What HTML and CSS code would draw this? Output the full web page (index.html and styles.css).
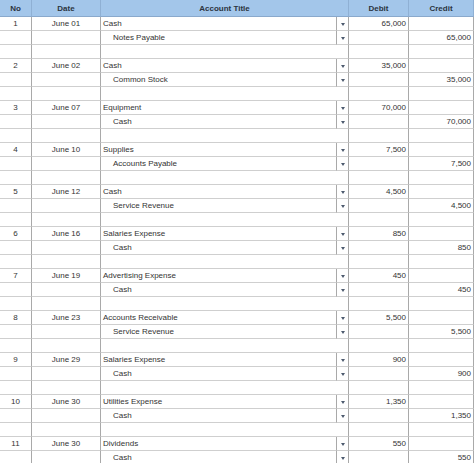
FILE: index.html
```html
<!DOCTYPE html>
<html>
<head>
<meta charset="utf-8">
<link rel="stylesheet" href="styles.css">
</head>
<body>
<div class="sheet" id="sheet">
  <div class="hd">No</div>
  <div class="hd">Date</div>
  <div class="hd span2">Account Title</div>
  <div class="hd">Debit</div>
  <div class="hd last">Credit</div>
</div>
<script src="app.js"></script>
</body>
</html>
```
FILE: styles.css
```css
html, body {
  margin: 0;
  padding: 0;
  background: #ffffff;
  overflow: hidden;
}
.sheet {
  display: grid;
  grid-template-columns: 32px 69px 236px 12px 60px 65px;
  grid-template-rows: 17px;
  grid-auto-rows: 14px;
  font-family: "Liberation Sans", Arial, sans-serif;
  font-size: 8px;
  color: #333333;
}
.sheet > div {
  box-sizing: border-box;
  border-right: 1px solid #a9a9a9;
  border-bottom: 1px solid #cfcfcf;
  display: flex;
  align-items: center;
  white-space: nowrap;
  overflow: hidden;
}
.sheet > .hd {
  background: #a3c6ea;
  font-weight: bold;
  color: #2b3440;
  justify-content: center;
  border-right: 1px solid #8fb0d4;
  border-bottom: 1px solid #8aa9cc;
}
.span2 { grid-column: span 2; }
.c { justify-content: center; }
.acct { padding-left: 2px; }
.acct.ind { padding-left: 12px; }
.num { justify-content: flex-end; padding-right: 2px; }
.sheet > .arr {
  justify-content: center;
  padding-top: 1px;
}
.arr::before {
  content: "";
  width: 0;
  height: 0;
  border-left: 2.5px solid transparent;
  border-right: 2.5px solid transparent;
  border-top: 3px solid #4d5a6e;
}
```
FILE: app.js
```js
var data = [
  ["1","June 01","Cash","Notes Payable","65,000"],
  ["2","June 02","Cash","Common Stock","35,000"],
  ["3","June 07","Equipment","Cash","70,000"],
  ["4","June 10","Supplies","Accounts Payable","7,500"],
  ["5","June 12","Cash","Service Revenue","4,500"],
  ["6","June 16","Salaries Expense","Cash","850"],
  ["7","June 19","Advertising Expense","Cash","450"],
  ["8","June 23","Accounts Receivable","Service Revenue","5,500"],
  ["9","June 29","Salaries Expense","Cash","900"],
  ["10","June 30","Utilities Expense","Cash","1,350"],
  ["11","June 30","Dividends","Cash","550"]
];
var s = document.getElementById("sheet");
function cell(cls, text) {
  var d = document.createElement("div");
  d.className = cls;
  if (text) d.textContent = text;
  s.appendChild(d);
}
data.forEach(function (r) {
  cell("c", r[0]); cell("c", r[1]); cell("acct", r[2]); cell("arr", ""); cell("num", r[4]); cell("num", "");
  cell("c", ""); cell("c", ""); cell("acct ind", r[3]); cell("arr", ""); cell("num", ""); cell("num", r[4]);
  cell("c", ""); cell("c", ""); cell("acct span2", ""); cell("num", ""); cell("num", "");
});
```
